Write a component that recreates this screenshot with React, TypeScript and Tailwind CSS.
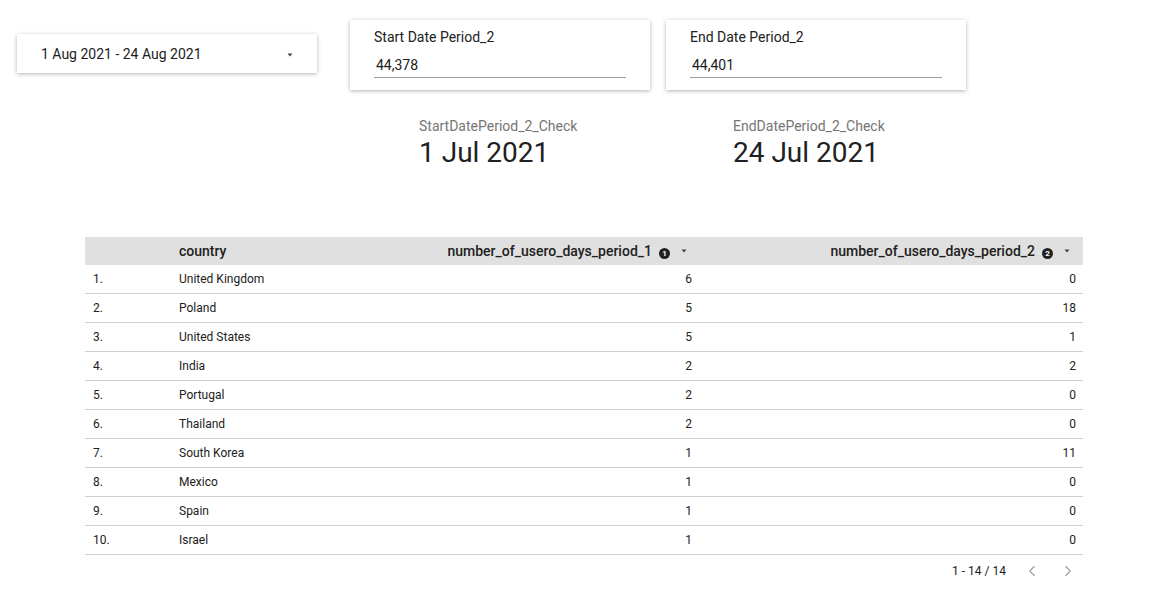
import { ChevronLeft, ChevronRight } from 'lucide-react';

const rows: [string, number, number][] = [
  ['United Kingdom', 6, 0],
  ['Poland', 5, 18],
  ['United States', 5, 1],
  ['India', 2, 2],
  ['Portugal', 2, 0],
  ['Thailand', 2, 0],
  ['South Korea', 1, 11],
  ['Mexico', 1, 0],
  ['Spain', 1, 0],
  ['Israel', 1, 0],
];

function Caret() {
  return (
    <svg width="8" height="8" viewBox="0 0 8 8" className="shrink-0">
      <path d="M1.5 2.5h5L4 5.5z" fill="#444" />
    </svg>
  );
}

function NumBadge({ n }: { n: number }) {
  return (
    <span className="inline-flex h-[11px] w-[11px] shrink-0 items-center justify-center rounded-full bg-[#212121] text-[8px] font-bold leading-none text-white">
      {n}
    </span>
  );
}

function InputCard({ label, value }: { label: string; value: string }) {
  return (
    <div className="h-[70px] w-[300px] bg-white px-6 pt-[8px] shadow-[0_1px_4px_rgba(0,0,0,0.3)]">
      <div className="text-[14px] leading-[18px] text-[#212121]">{label}</div>
      <div className="mt-[10px] border-b border-[#9e9e9e] pb-[3px] pl-[2px] text-[14px] leading-[18px] text-[#212121]">
        {value}
      </div>
    </div>
  );
}

function Scorecard({ label, value }: { label: string; value: string }) {
  return (
    <div className="flex flex-col">
      <div className="text-[14px] leading-[16px] text-[#757575]">{label}</div>
      <div className="mt-[2px] text-[28px] leading-[34px] text-[#212121]">{value}</div>
    </div>
  );
}

export default function App() {
  return (
    <div className="relative h-[605px] w-[1155px] bg-white font-['Roboto',sans-serif]">
      <div className="flex items-start pl-[17px] pt-[20px]">
        <div className="mt-[14px] flex h-[39px] w-[300px] items-center justify-between bg-white pl-6 pr-[23px] pt-[2px] shadow-[0_1px_4px_rgba(0,0,0,0.3)]">
          <span className="text-[14px] text-[#212121]">1 Aug 2021 - 24 Aug 2021</span>
          <Caret />
        </div>
        <div className="ml-[33px] flex gap-4">
          <InputCard label="Start Date Period_2" value="44,378" />
          <InputCard label="End Date Period_2" value="44,401" />
        </div>
      </div>

      <div className="flex pl-[419px] pt-[28px]">
        <div className="w-[314px]">
          <Scorecard label="StartDatePeriod_2_Check" value="1 Jul 2021" />
        </div>
        <Scorecard label="EndDatePeriod_2_Check" value="24 Jul 2021" />
      </div>

      <div className="ml-[85px] mt-[67px] w-[998px]">
        <div className="flex h-[28px] items-center bg-[#e0e0e0] text-[14px] font-medium text-[#212121]">
          <div className="w-[86px]" />
          <div className="flex-1 pl-2">country</div>
          <div className="flex w-[200px] items-center justify-end pr-[12px]">
            <span>number_of_usero_days_period_1</span>
            <span className="ml-[7px]"><NumBadge n={1} /></span>
            <span className="ml-[10px]"><Caret /></span>
          </div>
          <div className="flex w-[383px] items-center justify-end pr-[12px]">
            <span>number_of_usero_days_period_2</span>
            <span className="ml-[7px]"><NumBadge n={2} /></span>
            <span className="ml-[10px]"><Caret /></span>
          </div>
        </div>
        {rows.map(([country, a, b], i) => (
          <div
            key={country}
            className="flex h-[29px] items-center border-b border-[#d0d0d0] text-[12px] text-[#212121]"
          >
            <div className="w-[86px] pl-2">{i + 1}.</div>
            <div className="flex-1 pl-2">{country}</div>
            <div className="w-[200px] pr-2 text-right">{a}</div>
            <div className="w-[383px] pr-[7px] text-right">{b}</div>
          </div>
        ))}
        <div className="flex h-[32px] items-center justify-end text-[12px] text-[#212121]">
          <span className="mr-[17px]">1 - 14 / 14</span>
          <ChevronLeft size={18} strokeWidth={1.5} className="mr-[18px] text-[#9e9e9e]" />
          <ChevronRight size={18} strokeWidth={1.5} className="mr-[6px] text-[#9e9e9e]" />
        </div>
      </div>
    </div>
  );
}
